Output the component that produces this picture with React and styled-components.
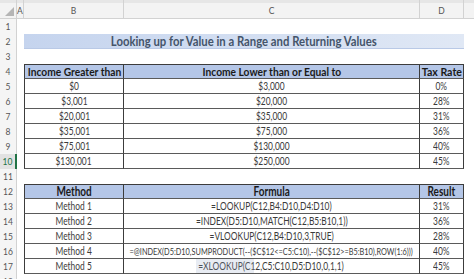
import styled, { createGlobalStyle } from "styled-components";

const COLS = "17px 7px 100px 296px 44px 1fr";
const FONT = `Lato, "Liberation Sans", sans-serif`;

const taxRows = [
  ["$0", "$3,000", "0%"],
  ["$3,001", "$20,000", "28%"],
  ["$20,001", "$35,000", "31%"],
  ["$35,001", "$75,000", "36%"],
  ["$75,001", "$130,000", "40%"],
  ["$130,001", "$250,000", "45%"],
];

const methodRows = [
  ["Method 1", "=LOOKUP(C12,B4:D10,D4:D10)", "31%"],
  ["Method 2", "=INDEX(D5:D10,MATCH(C12,B5:B10,1))", "36%"],
  ["Method 3", "=VLOOKUP(C12,B4:D10,3,TRUE)", "28%"],
  ["Method 4", "=@INDEX(D5:D10,SUMPRODUCT(--($C$12<=C5:C10),--($C$12>=B5:B10),ROW(1:6)))", "40%", true],
  ["Method 5", "=XLOOKUP(C12,C5:C10,D5:D10,0,1,1)", "45%"],
];

export default function App() {
  let n = 0;
  const num = () => ++n;

  return (
    <>
      <Global />
      <Sheet>
        <HeadRow>
          <Corner>
            <svg width="9" height="9" viewBox="0 0 9 9">
              <polygon points="9,0 9,9 0,9" fill="#b5b5b5" />
            </svg>
          </Corner>
          <ColHead>A</ColHead>
          <ColHead>B</ColHead>
          <ColHead>C</ColHead>
          <ColHead>D</ColHead>
          <ColHead $last />
        </HeadRow>

        <Row>
          <RowNum>{num()}</RowNum>
        </Row>
        <Row>
          <RowNum>{num()}</RowNum>
          <span />
          <Title>
            <Txt $sx={0.87}>Looking up for Value in a Range and Returning Values</Txt>
          </Title>
        </Row>
        <Row>
          <RowNum>{num()}</RowNum>
        </Row>

        <Row>
          <RowNum>{num()}</RowNum>
          <span />
          <Cell $head $first $top><Txt $sx={0.89}>Income Greater than</Txt></Cell>
          <Cell $head $top><Txt $sx={0.89}>Income Lower than or Equal to</Txt></Cell>
          <Cell $head $top><Txt $sx={0.92}>Tax Rate</Txt></Cell>
        </Row>
        {taxRows.map((r) => {
          const i = num();
          return (
            <Row key={i}>
              <RowNum $active={i === 10}>{i}</RowNum>
              <span />
              <Cell $first><Txt>{r[0]}</Txt></Cell>
              <Cell><Txt>{r[1]}</Txt></Cell>
              <Cell><Txt>{r[2]}</Txt></Cell>
            </Row>
          );
        })}

        <Row>
          <RowNum>{num()}</RowNum>
        </Row>

        <Row>
          <RowNum>{num()}</RowNum>
          <span />
          <Cell $head $big $first $top><Txt>Method</Txt></Cell>
          <Cell $head $big $top><Txt>Formula</Txt></Cell>
          <Cell $head $big $top><Txt>Result</Txt></Cell>
        </Row>
        {methodRows.map((r) => {
          const i = num();
          return (
            <Row key={i}>
              <RowNum>{i}</RowNum>
              <span />
              <Cell $first><Txt>{r[0]}</Txt></Cell>
              <Cell $small={r[3]}>
                <Txt>{r[1]}</Txt>
                {i === 17 && <Watermark />}
              </Cell>
              <Cell><Txt>{r[2]}</Txt></Cell>
            </Row>
          );
        })}

        <Row>
          <RowNum>{num()}</RowNum>
        </Row>
      </Sheet>
    </>
  );
}

const Global = createGlobalStyle`
  html, body {
    margin: 0;
    background: #ffffff;
  }
  body {
    font-family: ${FONT};
    overflow: hidden;
  }
`;

const Sheet = styled.div`
  width: 474px;
  height: 279px;
  overflow: hidden;
  display: flex;
  flex-direction: column;
  background: #ffffff;
`;

const HeadRow = styled.div`
  display: grid;
  grid-template-columns: ${COLS};
  height: 19px;
  flex: none;
  background: linear-gradient(#e6e6e6 0, #e6e6e6 3px, #f3f3f3 3px);
  border-bottom: 1px solid #d2d2d2;
  box-sizing: border-box;
`;

const Corner = styled.div`
  display: flex;
  align-items: flex-end;
  justify-content: flex-end;
  padding: 0 2px 2px 0;
  border-right: 1px solid #d2d2d2;
`;

const ColHead = styled.div`
  display: flex;
  align-items: center;
  justify-content: center;
  padding-top: 4px;
  font-size: 8.5px;
  color: #555555;
  border-right: ${(p) => (p.$last ? "none" : "1px solid #d2d2d2")};
`;

const Row = styled.div`
  display: grid;
  grid-template-columns: ${COLS};
  height: 15px;
  flex: none;
`;

const RowNum = styled.div`
  display: flex;
  align-items: center;
  justify-content: center;
  font-size: 8.5px;
  color: ${(p) => (p.$active ? "#217346" : "#555555")};
  background: ${(p) => (p.$active ? "#e2e2e2" : "#f5f5f5")};
  border-right: ${(p) => (p.$active ? "2px solid #217346" : "1px solid #d2d2d2")};
  box-sizing: border-box;
`;

const Txt = styled.span`
  display: inline-block;
  flex: none;
  white-space: nowrap;
  transform: scaleX(${(p) => p.$sx || 0.8});
`;

const Title = styled.div`
  grid-column: 3 / 6;
  display: flex;
  align-items: center;
  justify-content: center;
  overflow: hidden;
  font-size: 13px;
  font-weight: bold;
  color: #44546a;
  background: linear-gradient(90deg, #c5d4ee, #e0e8f5);
  border-bottom: 1px solid #b9c9e6;
  box-sizing: border-box;
`;

const Cell = styled.div`
  position: relative;
  display: flex;
  align-items: center;
  justify-content: center;
  overflow: hidden;
  box-sizing: border-box;
  font-size: ${(p) => (p.$small ? "9.2px" : p.$big ? "12.5px" : p.$head ? "11.5px" : "10.5px")};
  font-weight: ${(p) => (p.$head ? "bold" : "normal")};
  color: ${(p) => (p.$head ? "#1a1a1a" : "#3b3b3b")};
  background: ${(p) => (p.$head ? "#b4c6e7" : "#ffffff")};
  border-right: 1px solid #3c3c3c;
  border-bottom: 1px solid #5a5a5a;
  border-left: ${(p) => (p.$first ? "1px solid #3c3c3c" : "none")};
  border-top: ${(p) => (p.$top ? "1px solid #3c3c3c" : "none")};
`;

const Watermark = styled.div`
  position: absolute;
  left: 72px;
  top: 0;
  width: 58px;
  height: 14px;
  background: rgba(150, 170, 200, 0.22);
`;
